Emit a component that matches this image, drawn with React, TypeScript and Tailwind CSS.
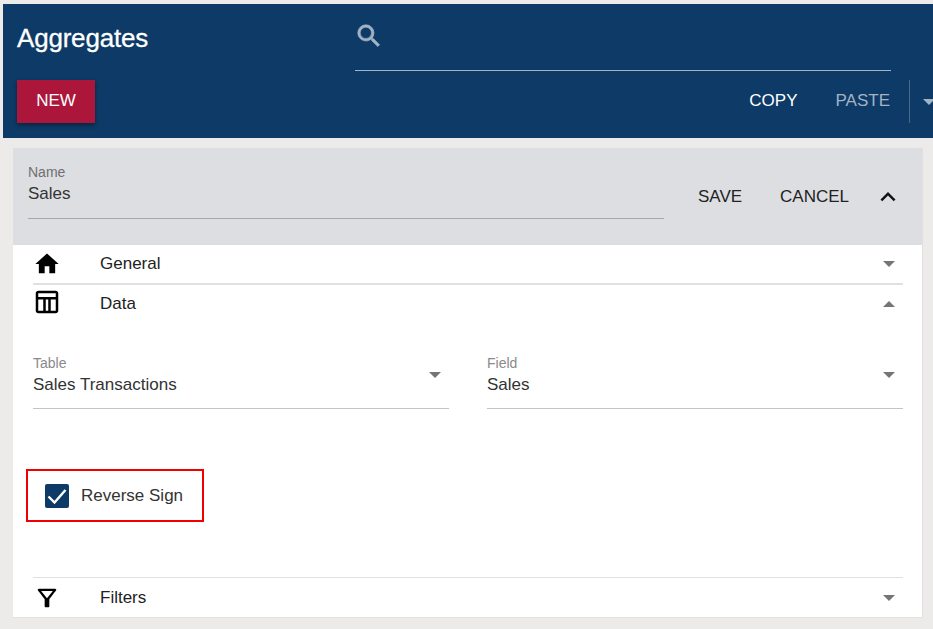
import React from 'react';

const Caret: React.FC<{ up?: boolean; className?: string }> = ({ up, className }) => (
  <svg viewBox="0 0 12 6" className={`w-3 h-1.5 fill-[#757575] ${className ?? ''}`}>
    {up ? <path d="M0 6 6 0l6 6z" /> : <path d="M0 0h12L6 6z" />}
  </svg>
);

const IconCell: React.FC<{ children: React.ReactNode }> = ({ children }) => (
  <div className="w-[67px] flex items-center shrink-0">{children}</div>
);

const SelectField: React.FC<{ label: string; value: string }> = ({ label, value }) => (
  <div className="flex-1 h-[54px] border-b border-[#c4c4c4] flex items-start justify-between">
    <div>
      <div className="text-sm leading-[16px] text-[#8a8a8a]">{label}</div>
      <div className="text-[17px] leading-[26px] pt-[1px] text-[#333]">{value}</div>
    </div>
    <Caret className="mt-[17px] mr-[8px]" />
  </div>
);

export default function App() {
  return (
    <div className="w-[933px] h-[629px] overflow-hidden bg-[#ecebe9] pt-1 pl-[3px] font-['Liberation_Sans',Arial,sans-serif]">
      <header className="h-[134px] bg-[#0d3a66] text-white">
        <div className="flex h-[67px]">
          <h1 className="w-[352px] pl-[14px] pt-[16px] text-[26px] leading-[36px] tracking-[-0.2px] [-webkit-text-stroke:0.3px_white]">Aggregates</h1>
          <div className="w-[536px] h-[67px] border-b border-[#a3b3c4] pt-[17px]">
            <svg viewBox="0 0 24 24" className="w-[30px] h-[30px] fill-[#a3b3c4] stroke-[#a3b3c4] stroke-[0.5] -ml-[1px]">
              <path d="M15.5 14h-.79l-.28-.27A6.471 6.471 0 0 0 16 9.5 6.5 6.5 0 1 0 9.5 16c1.61 0 3.09-.59 4.23-1.57l.27.28v.79l5 4.99L20.49 19l-4.99-5zm-6 0C7.01 14 5 11.99 5 9.5S7.01 5 9.5 5 14 7.01 14 9.5 11.99 14 9.5 14z" />
            </svg>
          </div>
        </div>
        <div className="flex items-start mt-[9px] pl-[14px]">
          <button className="w-[78px] h-[43px] bg-[#ac163b] text-[17px] shadow-[0_2px_4px_rgba(0,0,0,0.4)] pb-[2px]">NEW</button>
          <div className="ml-auto flex items-center h-[43px]">
            <span className="text-[17px] pb-[2px]">COPY</span>
            <span className="ml-[38px] text-[17px] pb-[2px] text-[#a3b3c4]">PASTE</span>
            <div className="ml-[19px] w-px h-[43px] bg-[#4a6a8c]" />
            <svg viewBox="0 0 12 6" className="ml-[13px] w-3 h-1.5 fill-[#a3b3c4] shrink-0 mr-[-2px]">
              <path d="M0 0h12L6 6z" />
            </svg>
          </div>
        </div>
      </header>

      <main className="ml-[10px] mt-[10px] w-[910px] h-[470px] bg-white border-b border-r border-[#e0e0e0] text-[#222]">
        <div className="h-[97px] bg-[#dddee2] flex items-start">
          <div className="ml-[15px] w-[636px] h-[71px] border-b border-[#a8a8ab] pt-[16px]">
            <div className="text-sm leading-[16px] text-[#6f6f72]">Name</div>
            <div className="text-[17px] leading-[26px] pt-[1px] text-[#333]">Sales</div>
          </div>
          <div className="flex items-center h-[97px] text-[17px] text-[#222]">
            <span className="ml-[34px]">SAVE</span>
            <span className="ml-[38px]">CANCEL</span>
            <svg viewBox="0 0 24 24" className="ml-[24px] w-[30px] h-[30px] fill-[#111]">
              <path d="M7.41 15.41 12 10.83l4.59 4.58L18 14l-6-6-6 6z" />
            </svg>
          </div>
        </div>

        <div className="ml-5 mr-[19px] h-[373px] flex flex-col">
          <div className="h-[40px] border-b-2 border-[#e0e0e0] flex items-center pb-[1px]">
            <IconCell>
              <svg viewBox="0 0 24 24" className="w-7 h-7 fill-black">
                <path d="M10 20v-6h4v6h5v-8h3L12 3 2 12h3v8z" />
              </svg>
            </IconCell>
            <span className="text-[17px]">General</span>
            <Caret className="ml-auto mr-[8px]" />
          </div>
          <div className="h-[38px] flex items-center pb-[1px]">
            <IconCell>
              <svg viewBox="0 0 24 24" className="w-[30px] h-[30px] fill-black -ml-[1px] -mt-[3px]">
                <path d="M3 5v14c0 1.1.9 2 2 2h14c1.1 0 2-.9 2-2V5c0-1.1-.9-2-2-2H5c-1.1 0-2 .9-2 2zm2 0h14v3H5V5zm0 14v-9h4v9H5zm6 0v-9h2v9h-2zm8 0h-4v-9h4v9z" />
              </svg>
            </IconCell>
            <span className="text-[17px]">Data</span>
            <Caret up className="ml-auto mr-[8px]" />
          </div>
          <div className="flex gap-[38px] mt-[32px]">
            <SelectField label="Table" value="Sales Transactions" />
            <SelectField label="Field" value="Sales" />
          </div>
          <div className="mt-[60px] -ml-[7px] w-[178px] h-[53px] border-2 border-[#f00000] flex items-center pl-[17px]">
            <div className="w-6 h-6 rounded-[2px] bg-[#0d3a66] flex items-center justify-center">
              <svg viewBox="0 0 24 24" className="w-6 h-6 fill-none stroke-white stroke-[2.4]">
                <path d="M3.5 12.5 9.5 18.5 20.5 6" />
              </svg>
            </div>
            <span className="ml-3 text-[17px] text-[#333]">Reverse Sign</span>
          </div>
          <div className="mt-[55px] h-[40px] border-t border-[#e0e0e0] flex items-center">
            <IconCell>
              <svg viewBox="0 0 24 24" className="w-7 h-7 fill-black">
                <path d="M7 6h10l-5.01 6.3L7 6zm-2.75-.39C6.27 8.2 10 13 10 13v6c0 .55.45 1 1 1h2c.55 0 1-.45 1-1v-6s3.72-4.8 5.74-7.39A.998.998 0 0 0 18.95 4H5.04c-.83 0-1.3.95-.79 1.61z" />
              </svg>
            </IconCell>
            <span className="text-[17px]">Filters</span>
            <Caret className="ml-auto mr-[8px]" />
          </div>
        </div>
      </main>
    </div>
  );
}
